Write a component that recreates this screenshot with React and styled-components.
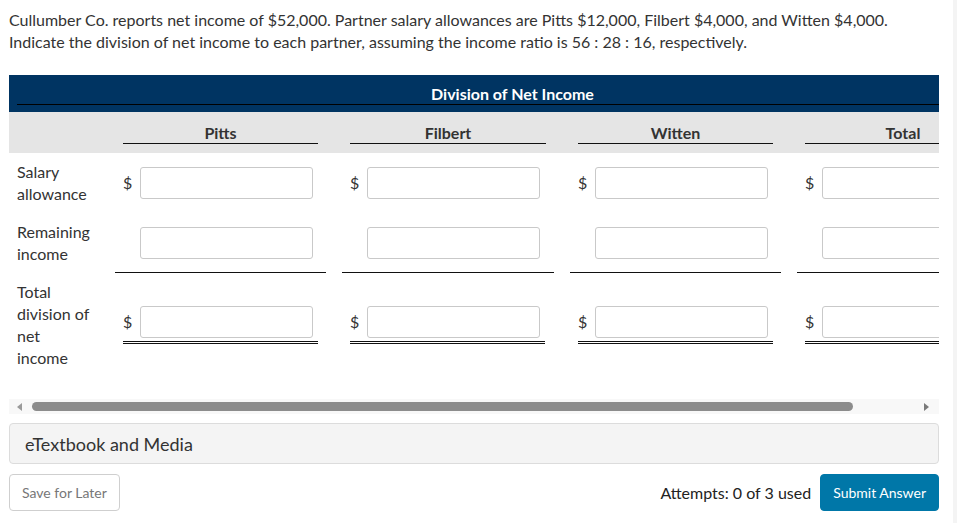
import React from "react";
import styled, { createGlobalStyle } from "styled-components";

const GlobalStyle = createGlobalStyle`
  html, body { margin: 0; padding: 0; background: #fff; }
  body { font-family: Lato, "Open Sans", "Liberation Sans", sans-serif; color: #333; }
  * { box-sizing: border-box; }
`;

const Page = styled.div`
  display: flex;
  min-height: 523px;
`;

const Main = styled.main`
  width: 953px;
  padding: 9px 14px 0 9px;
`;

const Gutter = styled.div`
  flex: 1;
  background: #f4f4f4;
`;

const Prompt = styled.p`
  margin: 0;
  font-size: 16px;
  line-height: 22px;
  color: #333;
`;

const Viewport = styled.div`
  margin-top: 22px;
  width: 930px;
  overflow: hidden;
`;

const Grid = styled.div`
  display: grid;
  grid-template-columns: 106px 227px 228px 227px 228px;
  width: 1016px;
`;

const TitleBand = styled.div`
  grid-column: 1 / -1;
  background: #003462;
  padding: 0 17px 7px 8px;
`;

const Title = styled.div`
  padding-top: 9px;
  line-height: 20px;
  font-size: 16px;
  font-weight: 700;
  color: #fff;
  text-align: center;
  border-bottom: 1px solid #000;
`;

const HeadCell = styled.div`
  background: #e5e5e5;
  padding: 10px 24px 9px 8px;
`;

const HeadLabel = styled.div`
  line-height: 21px;
  font-size: 16px;
  font-weight: 700;
  color: #333;
  text-align: center;
  border-bottom: 1px solid #111;
`;

const RowLabel = styled.div`
  padding: 8px 0 8px 8px;
  font-size: 16px;
  line-height: 22px;
  color: #333;
  & > span { display: block; width: 75px; }
`;

const ValueCell = styled.div`
  display: flex;
  align-items: center;
  margin-right: ${(p) => (p.$rule === "single" ? "16px" : "0")};
  border-bottom: ${(p) => (p.$rule === "single" ? "1px solid #111" : "none")};
`;

const Group = styled.div`
  display: flex;
  align-items: center;
  width: 195px;
  margin-left: 8px;
  padding-bottom: ${(p) => (p.$double ? "3px" : "0")};
  border-bottom: ${(p) => (p.$double ? "3px double #111" : "none")};
`;

const Dollar = styled.span`
  width: 17px;
  font-size: 16px;
  line-height: 20px;
  color: #333;
`;

const AmountInput = styled.input`
  width: 173px;
  height: 32px;
  border: 1px solid #c9c9c9;
  border-radius: 3px;
  background: #fff;
  padding: 0 6px;
  font: inherit;
  outline: none;
`;

const Scrollbar = styled.div`
  display: flex;
  align-items: center;
  height: 15px;
  margin-top: 22px;
  padding: 0 10px 0 8px;
  background: #f8f8f8;
`;

const Thumb = styled.div`
  width: 821px;
  height: 9px;
  margin-left: 10px;
  border-radius: 5px;
  background: #8c8c8c;
`;

const RightArrow = styled.svg`
  margin-left: auto;
`;

const MediaBox = styled.div`
  display: flex;
  align-items: center;
  height: 41px;
  margin-top: 9px;
  padding-left: 15px;
  background: #f4f4f4;
  border: 1px solid #dcdcdc;
  border-radius: 4px;
  font-size: 18px;
  color: #333;
`;

const Footer = styled.div`
  display: flex;
  align-items: center;
  justify-content: space-between;
  margin-top: 10px;
`;

const Button = styled.button`
  height: 37px;
  padding: 0 12px;
  border-radius: 4px;
  font-family: inherit;
  font-size: 14px;
  cursor: pointer;
  border: 1px solid ${(p) => (p.$primary ? "#0077a8" : "#cfcfcf")};
  background: ${(p) => (p.$primary ? "#0077a8" : "#fff")};
  color: ${(p) => (p.$primary ? "#fff" : "#777")};
`;

const Actions = styled.div`
  display: flex;
  align-items: center;
  gap: 9px;
`;

const Attempts = styled.span`
  font-size: 16px;
  color: #222;
`;

const partners = ["Pitts", "Filbert", "Witten", "Total"];

const rows = [
  { label: ["Salary", "allowance"], dollar: true, rule: "none" },
  { label: ["Remaining", "income"], dollar: false, rule: "single" },
  { label: ["Total", "division of", "net", "income"], dollar: true, rule: "double" },
];

export default function App() {
  return (
    <>
      <GlobalStyle />
      <Page>
        <Main>
          <Prompt>
            Cullumber Co. reports net income of $52,000. Partner salary allowances are Pitts $12,000, Filbert $4,000, and Witten $4,000.
            <br />
            Indicate the division of net income to each partner, assuming the income ratio is 56 : 28 : 16, respectively.
          </Prompt>
          <Viewport>
            <Grid>
              <TitleBand>
                <Title>Division of Net Income</Title>
              </TitleBand>
              <HeadCell />
              {partners.map((p) => (
                <HeadCell key={p}>
                  <HeadLabel>{p}</HeadLabel>
                </HeadCell>
              ))}
              {rows.map((r) => (
                <React.Fragment key={r.label.join(" ")}>
                  <RowLabel>
                    <span>{r.label.join(" ")}</span>
                  </RowLabel>
                  {partners.map((p) => (
                    <ValueCell key={p} $rule={r.rule}>
                      <Group $double={r.rule === "double"}>
                        <Dollar>{r.dollar ? "$" : ""}</Dollar>
                        <AmountInput type="text" aria-label={`${p} ${r.label.join(" ")}`} />
                      </Group>
                    </ValueCell>
                  ))}
                </React.Fragment>
              ))}
            </Grid>
          </Viewport>
          <Scrollbar>
            <svg width="5" height="8" viewBox="0 0 5 8">
              <path d="M5 0 L0 4 L5 8 Z" fill="#9a9a9a" />
            </svg>
            <Thumb />
            <RightArrow width="5" height="8" viewBox="0 0 5 8">
              <path d="M0 0 L5 4 L0 8 Z" fill="#7a7a7a" />
            </RightArrow>
          </Scrollbar>
          <MediaBox>eTextbook and Media</MediaBox>
          <Footer>
            <Button>Save for Later</Button>
            <Actions>
              <Attempts>Attempts: 0 of 3 used</Attempts>
              <Button $primary>Submit Answer</Button>
            </Actions>
          </Footer>
        </Main>
        <Gutter />
      </Page>
    </>
  );
}
